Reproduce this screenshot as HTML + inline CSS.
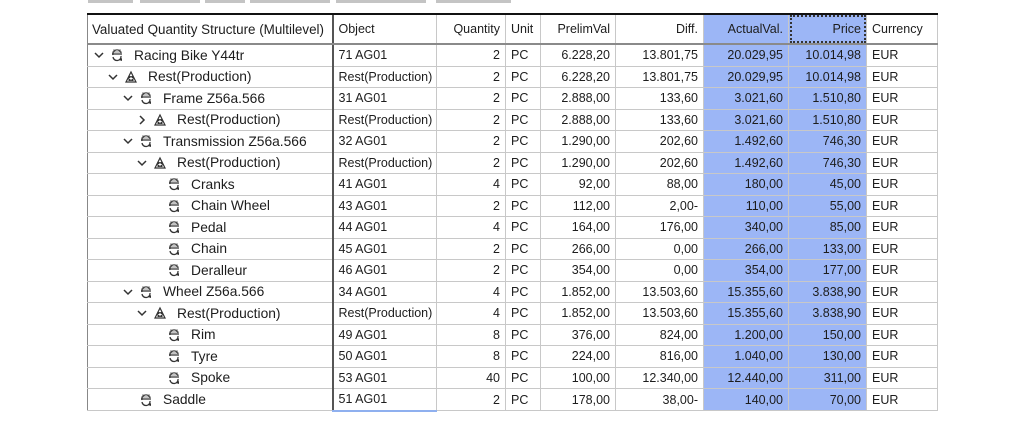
<!DOCTYPE html>
<html><head><style>
body{margin:0;background:#fff;width:1024px;height:427px;overflow:hidden;position:relative;font-family:"Liberation Sans",sans-serif;font-size:12.5px;color:#1d1d1d}
.bar{position:absolute;top:0;height:3px;background:#c4c4c4}
table{position:absolute;left:87px;top:13px;border-collapse:collapse;table-layout:fixed;width:850px}
td,th{border:1px solid #c8c8c8;padding:0 5px;white-space:nowrap;overflow:hidden;height:20.5px;font-weight:normal}
th{height:28px;text-align:left;border-top:2px solid #111;border-bottom:2px solid #8a8a8a}
.r{text-align:right}
.b{background:#9cb6f6}
.sep{border-left:2px solid #555}
tr>*:first-child{border-left:1px solid #888;padding-left:0;font-size:13.8px}
tr>th:first-child{font-size:13.4px}
.pr{outline:2px dotted #333;outline-offset:-3px}
.t{display:flex;align-items:center;height:20px}
.ch{width:14px;height:14px;display:inline-block}
.ic{display:inline-block;width:14px;height:14px;margin:0 10px 0 4px}
</style></head><body>
<div class="bar" style="left:88px;width:45px"></div><div class="bar" style="left:140px;width:60px"></div><div class="bar" style="left:205px;width:40px"></div><div class="bar" style="left:250px;width:80px"></div><div class="bar" style="left:336px;width:90px"></div><div class="bar" style="left:436px;width:75px"></div>
<svg width="0" height="0" style="position:absolute"><defs>
<symbol id="g" viewBox="0 0 14 14"><path d="M3 7A4 4 0 0 1 11 5M11 8A4 4 0 0 1 3 9M2 6h10" fill="none" stroke="#333" stroke-width="1.3"/><path d="M9 12l3-2 0 3z" fill="#333"/><path d="M3 2h8M2 4h10" stroke="#666" stroke-width="0.8"/></symbol>
<symbol id="p" viewBox="0 0 14 14"><path d="M2 12L7 2 12 12z" fill="none" stroke="#333" stroke-width="1.2"/><rect x="4.5" y="6" width="5" height="5" fill="#333"/><path d="M7 6.8v3.4M5.3 8.5h3.4" stroke="#fff" stroke-width="1"/></symbol>
<symbol id="d" viewBox="0 0 14 14"><path d="M3 5l4 4 4-4" fill="none" stroke="#333" stroke-width="1.5"/></symbol>
<symbol id="rt" viewBox="0 0 14 14"><path d="M5 3l4 4-4 4" fill="none" stroke="#333" stroke-width="1.5"/></symbol>
</defs></svg>
<table>
<colgroup><col style="width:245px"><col style="width:104px"><col style="width:69px"><col style="width:35px"><col style="width:75px"><col style="width:88px"><col style="width:85px"><col style="width:78px"><col style="width:71px"></colgroup>
<tr><th style="padding-left:4px">Valuated Quantity Structure (Multilevel)</th><th class="sep">Object</th><th class="r">Quantity</th><th>Unit</th><th class="r">PrelimVal</th><th class="r">Diff.</th><th class="r b">ActualVal.</th><th class="r b pr">Price</th><th>Currency</th></tr>
<tr><td><div class="t" style="padding-left:4px"><svg class="ch"><use href="#d"/></svg><svg class="ic"><use href="#g"/></svg>Racing Bike Y44tr</div></td><td class="sep">71 AG01</td><td class="r">2</td><td>PC</td><td class="r">6.228,20</td><td class="r">13.801,75</td><td class="r b">20.029,95</td><td class="r b">10.014,98</td><td>EUR</td></tr>
<tr><td><div class="t" style="padding-left:18px"><svg class="ch"><use href="#d"/></svg><svg class="ic"><use href="#p"/></svg>Rest(Production)</div></td><td class="sep">Rest(Production)</td><td class="r">2</td><td>PC</td><td class="r">6.228,20</td><td class="r">13.801,75</td><td class="r b">20.029,95</td><td class="r b">10.014,98</td><td>EUR</td></tr>
<tr><td><div class="t" style="padding-left:33px"><svg class="ch"><use href="#d"/></svg><svg class="ic"><use href="#g"/></svg>Frame Z56a.566</div></td><td class="sep">31 AG01</td><td class="r">2</td><td>PC</td><td class="r">2.888,00</td><td class="r">133,60</td><td class="r b">3.021,60</td><td class="r b">1.510,80</td><td>EUR</td></tr>
<tr><td><div class="t" style="padding-left:47px"><svg class="ch"><use href="#rt"/></svg><svg class="ic"><use href="#p"/></svg>Rest(Production)</div></td><td class="sep">Rest(Production)</td><td class="r">2</td><td>PC</td><td class="r">2.888,00</td><td class="r">133,60</td><td class="r b">3.021,60</td><td class="r b">1.510,80</td><td>EUR</td></tr>
<tr><td><div class="t" style="padding-left:33px"><svg class="ch"><use href="#d"/></svg><svg class="ic"><use href="#g"/></svg>Transmission Z56a.566</div></td><td class="sep">32 AG01</td><td class="r">2</td><td>PC</td><td class="r">1.290,00</td><td class="r">202,60</td><td class="r b">1.492,60</td><td class="r b">746,30</td><td>EUR</td></tr>
<tr><td><div class="t" style="padding-left:47px"><svg class="ch"><use href="#d"/></svg><svg class="ic"><use href="#p"/></svg>Rest(Production)</div></td><td class="sep">Rest(Production)</td><td class="r">2</td><td>PC</td><td class="r">1.290,00</td><td class="r">202,60</td><td class="r b">1.492,60</td><td class="r b">746,30</td><td>EUR</td></tr>
<tr><td><div class="t" style="padding-left:75px"><svg class="ic"><use href="#g"/></svg>Cranks</div></td><td class="sep">41 AG01</td><td class="r">4</td><td>PC</td><td class="r">92,00</td><td class="r">88,00</td><td class="r b">180,00</td><td class="r b">45,00</td><td>EUR</td></tr>
<tr><td><div class="t" style="padding-left:75px"><svg class="ic"><use href="#g"/></svg>Chain Wheel</div></td><td class="sep">43 AG01</td><td class="r">2</td><td>PC</td><td class="r">112,00</td><td class="r">2,00-</td><td class="r b">110,00</td><td class="r b">55,00</td><td>EUR</td></tr>
<tr><td><div class="t" style="padding-left:75px"><svg class="ic"><use href="#g"/></svg>Pedal</div></td><td class="sep">44 AG01</td><td class="r">4</td><td>PC</td><td class="r">164,00</td><td class="r">176,00</td><td class="r b">340,00</td><td class="r b">85,00</td><td>EUR</td></tr>
<tr><td><div class="t" style="padding-left:75px"><svg class="ic"><use href="#g"/></svg>Chain</div></td><td class="sep">45 AG01</td><td class="r">2</td><td>PC</td><td class="r">266,00</td><td class="r">0,00</td><td class="r b">266,00</td><td class="r b">133,00</td><td>EUR</td></tr>
<tr><td><div class="t" style="padding-left:75px"><svg class="ic"><use href="#g"/></svg>Deralleur</div></td><td class="sep">46 AG01</td><td class="r">2</td><td>PC</td><td class="r">354,00</td><td class="r">0,00</td><td class="r b">354,00</td><td class="r b">177,00</td><td>EUR</td></tr>
<tr><td><div class="t" style="padding-left:33px"><svg class="ch"><use href="#d"/></svg><svg class="ic"><use href="#g"/></svg>Wheel Z56a.566</div></td><td class="sep">34 AG01</td><td class="r">4</td><td>PC</td><td class="r">1.852,00</td><td class="r">13.503,60</td><td class="r b">15.355,60</td><td class="r b">3.838,90</td><td>EUR</td></tr>
<tr><td><div class="t" style="padding-left:47px"><svg class="ch"><use href="#d"/></svg><svg class="ic"><use href="#p"/></svg>Rest(Production)</div></td><td class="sep">Rest(Production)</td><td class="r">4</td><td>PC</td><td class="r">1.852,00</td><td class="r">13.503,60</td><td class="r b">15.355,60</td><td class="r b">3.838,90</td><td>EUR</td></tr>
<tr><td><div class="t" style="padding-left:75px"><svg class="ic"><use href="#g"/></svg>Rim</div></td><td class="sep">49 AG01</td><td class="r">8</td><td>PC</td><td class="r">376,00</td><td class="r">824,00</td><td class="r b">1.200,00</td><td class="r b">150,00</td><td>EUR</td></tr>
<tr><td><div class="t" style="padding-left:75px"><svg class="ic"><use href="#g"/></svg>Tyre</div></td><td class="sep">50 AG01</td><td class="r">8</td><td>PC</td><td class="r">224,00</td><td class="r">816,00</td><td class="r b">1.040,00</td><td class="r b">130,00</td><td>EUR</td></tr>
<tr><td><div class="t" style="padding-left:75px"><svg class="ic"><use href="#g"/></svg>Spoke</div></td><td class="sep">53 AG01</td><td class="r">40</td><td>PC</td><td class="r">100,00</td><td class="r">12.340,00</td><td class="r b">12.440,00</td><td class="r b">311,00</td><td>EUR</td></tr>
<tr><td><div class="t" style="padding-left:47px"><svg class="ic"><use href="#g"/></svg>Saddle</div></td><td class="sep" style="border-bottom:2px solid #8fb0ef">51 AG01</td><td class="r">2</td><td>PC</td><td class="r">178,00</td><td class="r">38,00-</td><td class="r b">140,00</td><td class="r b">70,00</td><td>EUR</td></tr>
</table>
</body></html>
